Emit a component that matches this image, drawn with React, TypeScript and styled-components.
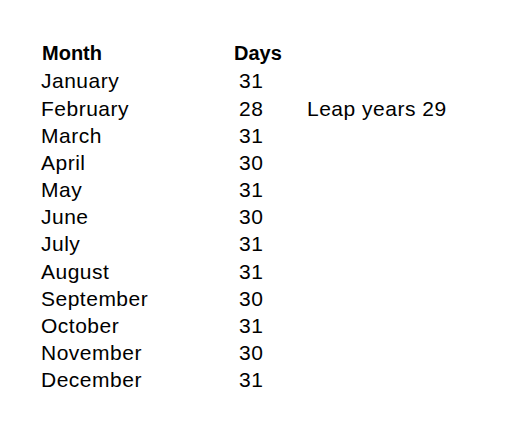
import React from 'react';
import styled, { createGlobalStyle } from 'styled-components';

const GlobalStyle = createGlobalStyle`
  html, body {
    margin: 0;
    background: #ffffff;
  }
`;

const Page = styled.div`
  padding: 40.2px 0 0 41px;
  font-family: "Liberation Sans", Arial, sans-serif;
  font-size: 21px;
  letter-spacing: 0.5px;
  line-height: 27.17px;
  color: #000;
`;

const Table = styled.div`
  display: grid;
  grid-template-columns: 192px 74px auto;
`;

const Cell = styled.div<{ $head?: boolean; $num?: boolean }>`
  font-weight: ${p => (p.$head ? 700 : 400)};
  font-size: ${p => (p.$head ? '20px' : 'inherit')};
  letter-spacing: ${p => (p.$head ? '0' : 'inherit')};
  padding-left: ${p => (p.$num ? '6px' : p.$head ? '1px' : '0')};
  white-space: nowrap;
`;

const months: [string, number, string?][] = [
  ['January', 31],
  ['February', 28, 'Leap years 29'],
  ['March', 31],
  ['April', 30],
  ['May', 31],
  ['June', 30],
  ['July', 31],
  ['August', 31],
  ['September', 30],
  ['October', 31],
  ['November', 30],
  ['December', 31],
];

export default function App() {
  return (
    <>
      <GlobalStyle />
      <Page>
        <Table>
          <Cell $head>Month</Cell>
          <Cell $head>Days</Cell>
          <Cell />
          {months.map(([name, days, note]) => (
            <React.Fragment key={name}>
              <Cell>{name}</Cell>
              <Cell $num>{days}</Cell>
              <Cell>{note}</Cell>
            </React.Fragment>
          ))}
        </Table>
      </Page>
    </>
  );
}
